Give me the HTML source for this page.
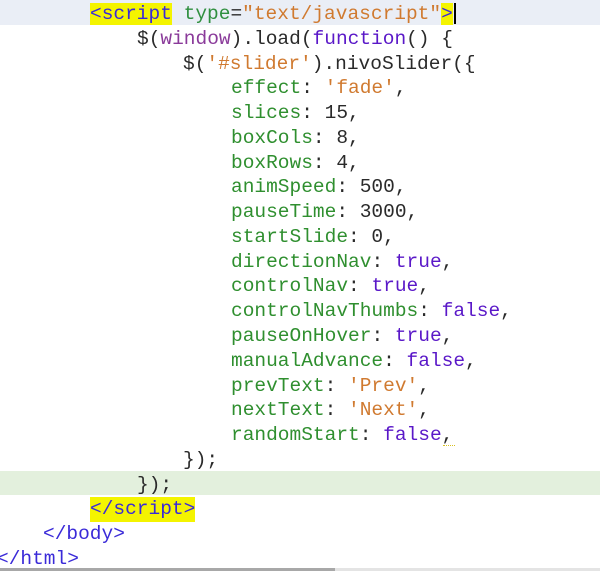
<!DOCTYPE html>
<html><head><style>
body{margin:0;width:600px;height:571px;overflow:hidden;background:#fff;position:relative;font-family:"Liberation Mono","DejaVu Sans Mono",monospace;font-size:19.5px;color:#2a2a2a}
.l{position:absolute;left:0;width:600px;height:24.77px;line-height:24.77px;white-space:pre}
.l>span{margin-top:1px}
.t{color:#3a2ad8}.a{color:#2f8f3f}.s{color:#d07a30}.k{color:#2f8f2f}.b{color:#5a18c8}.w{color:#8a3a9a}
.h{background:#f4f400}
</style></head><body>
<div class="l" style="top:0;background:#eaeef6"><span style="position:absolute;left:90px;top:1px"><span class="t h">&lt;script</span> <span class="a">type</span>=<span class="s">"text/javascript"</span><span class="t h">&gt;</span></span><span style="position:absolute;left:454px;top:2px;width:2px;height:21px;background:#000"></span></div>
<div class="l" style="top:25.77px"><span style="position:absolute;left:137px">$(<span class="w">window</span>).load(<span class="b">function</span>() {</span></div>
<div class="l" style="top:50.54px"><span style="position:absolute;left:183px">$(<span class="s">'#slider'</span>).nivoSlider({</span></div>
<div class="l" style="top:75.31px"><span style="position:absolute;left:231px"><span class="k">effect</span>: <span class="s">'fade'</span>,</span></div>
<div class="l" style="top:100.08px"><span style="position:absolute;left:231px"><span class="k">slices</span>: 15,</span></div>
<div class="l" style="top:124.85px"><span style="position:absolute;left:231px"><span class="k">boxCols</span>: 8,</span></div>
<div class="l" style="top:149.62px"><span style="position:absolute;left:231px"><span class="k">boxRows</span>: 4,</span></div>
<div class="l" style="top:174.39px"><span style="position:absolute;left:231px"><span class="k">animSpeed</span>: 500,</span></div>
<div class="l" style="top:199.16px"><span style="position:absolute;left:231px"><span class="k">pauseTime</span>: 3000,</span></div>
<div class="l" style="top:223.93px"><span style="position:absolute;left:231px"><span class="k">startSlide</span>: 0,</span></div>
<div class="l" style="top:248.7px"><span style="position:absolute;left:231px"><span class="k">directionNav</span>: <span class="b">true</span>,</span></div>
<div class="l" style="top:273.47px"><span style="position:absolute;left:231px"><span class="k">controlNav</span>: <span class="b">true</span>,</span></div>
<div class="l" style="top:298.24px"><span style="position:absolute;left:231px"><span class="k">controlNavThumbs</span>: <span class="b">false</span>,</span></div>
<div class="l" style="top:323.01px"><span style="position:absolute;left:231px"><span class="k">pauseOnHover</span>: <span class="b">true</span>,</span></div>
<div class="l" style="top:347.78px"><span style="position:absolute;left:231px"><span class="k">manualAdvance</span>: <span class="b">false</span>,</span></div>
<div class="l" style="top:372.55px"><span style="position:absolute;left:231px"><span class="k">prevText</span>: <span class="s">'Prev'</span>,</span></div>
<div class="l" style="top:397.32px"><span style="position:absolute;left:231px"><span class="k">nextText</span>: <span class="s">'Next'</span>,</span></div>
<div class="l" style="top:422.09px"><span style="position:absolute;left:231px"><span class="k">randomStart</span>: <span class="b">false</span>,</span><span style="position:absolute;left:443px;top:20px;width:12px;height:2px;border-bottom:1px dotted #d8c020"></span></div>
<div class="l" style="top:446.86px"><span style="position:absolute;left:183px">});</span></div>
<div class="l" style="top:470.63px;background:#e3f0dd"><span style="position:absolute;left:137px;top:1px">});</span></div>
<div class="l" style="top:496.4px"><span style="position:absolute;left:90px" class="t h">&lt;/script&gt;</span></div>
<div class="l" style="top:521.17px"><span style="position:absolute;left:43px" class="t">&lt;/body&gt;</span></div>
<div class="l" style="top:545.94px"><span style="position:absolute;left:-3px" class="t">&lt;/html&gt;</span></div>
<div style="position:absolute;left:0;top:568px;width:335px;height:3px;background:#a8a8a8"></div>
<div style="position:absolute;left:335px;top:568px;width:265px;height:3px;background:#e4e4e4"></div>
</body></html>
